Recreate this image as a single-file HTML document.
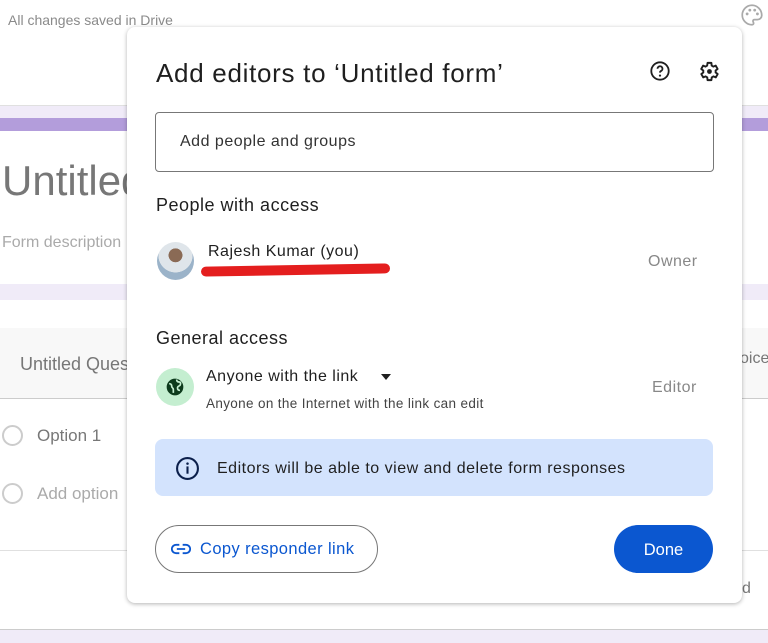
<!DOCTYPE html>
<html><head><style>
body{margin:0;width:768px;height:643px;overflow:hidden;background:#f0ebf8;font-family:"Liberation Sans",sans-serif;position:relative}
.a{position:absolute}
.d{letter-spacing:.5px}
</style></head><body>
<div class="a" style="left:0;top:0;width:768px;height:105px;background:#fff;border-bottom:1px solid #e0e0e0"></div>
<div class="a" style="left:8px;top:12px;font-size:14px;color:#8a8a8a">All changes saved in Drive</div>
<svg class="a" style="left:739px;top:2px" width="26" height="26" viewBox="0 0 24 24"><path d="M12 3a9 9 0 0 0 0 18c1 0 1.5-.7 1.5-1.4 0-.8-.6-1.1-.6-1.9 0-.9.7-1.4 1.5-1.4H17a4 4 0 0 0 4-4c0-5-4-9.3-9-9.3z" fill="none" stroke="#aaa" stroke-width="1.6"/><circle cx="7.5" cy="11" r="1.3" fill="#aaa"/><circle cx="10" cy="7.5" r="1.3" fill="#aaa"/><circle cx="14.5" cy="7.5" r="1.3" fill="#aaa"/><circle cx="17" cy="11" r="1.3" fill="#aaa"/></svg>
<div class="a" style="left:0;top:118px;width:768px;height:13px;background:#b39ddb"></div>
<div class="a" style="left:0;top:131px;width:768px;height:153px;background:#fff"></div>
<div class="a" style="left:2px;top:157px;font-size:42px;color:#777">Untitled</div>
<div class="a" style="left:2px;top:234px;font-size:16px;color:#aaa">Form description</div>
<div class="a" style="left:0;top:300px;width:768px;height:250px;background:#fff"></div>
<div class="a" style="left:0;top:328px;width:768px;height:70px;background:#f8f8f8;border-bottom:1px solid #ccc"></div>
<div class="a" style="left:20px;top:354px;font-size:18px;color:#777">Untitled Question</div>
<div class="a" style="left:740px;top:350px;font-size:16px;color:#777">oice</div>
<div class="a" style="left:2px;top:425px;width:21px;height:21px;border:2px solid #ccc;border-radius:50%;box-sizing:border-box"></div>
<div class="a" style="left:37px;top:426px;font-size:17px;color:#777">Option 1</div>
<div class="a" style="left:2px;top:483px;width:21px;height:21px;border:2px solid #ccc;border-radius:50%;box-sizing:border-box"></div>
<div class="a" style="left:37px;top:484px;font-size:17px;color:#aaa">Add option</div>
<div class="a" style="left:0;top:550px;width:768px;height:78px;background:#fff;border-top:1px solid #e0e0e0;border-bottom:1px solid #ccc"></div>
<div class="a" style="left:742px;top:580px;font-size:16px;color:#777">d</div>

<div class="a" style="left:127px;top:27px;width:615px;height:576px;background:#fff;border-radius:8px;box-shadow:0 1px 4px rgba(0,0,0,.3)"></div>
<div class="a" style="left:156px;top:58px;font-size:26px;letter-spacing:.7px;color:#1f1f1f">Add editors to ‘Untitled form’</div>
<svg class="a" style="left:649px;top:60px" width="22" height="22" viewBox="0 0 24 24"><circle cx="12" cy="12" r="9.5" fill="none" stroke="#1f1f1f" stroke-width="2"/><path d="M9.3 9.5a2.7 2.7 0 1 1 3.8 2.5c-.8.4-1.1.9-1.1 1.8" fill="none" stroke="#1f1f1f" stroke-width="2"/><circle cx="12" cy="17" r="1.2" fill="#1f1f1f"/></svg>
<svg class="a" style="left:697px;top:60px" width="23" height="23" viewBox="0 0 24 24"><path d="M19.4 13a7.5 7.5 0 0 0 0-2l2.1-1.6-2-3.5-2.5 1a7 7 0 0 0-1.7-1L15 3h-4l-.4 2.9a7 7 0 0 0-1.7 1l-2.5-1-2 3.5L6.6 11a7.5 7.5 0 0 0 0 2l-2.1 1.6 2 3.5 2.5-1a7 7 0 0 0 1.7 1L11 21h4l.4-2.9a7 7 0 0 0 1.7-1l2.5 1 2-3.5z" fill="none" stroke="#1f1f1f" stroke-width="2" stroke-linejoin="round"/><circle cx="13" cy="12" r="2.5" fill="#1f1f1f"/></svg>
<div class="a" style="left:155px;top:112px;width:557px;height:58px;border:1px solid #777;border-radius:4px"></div>
<div class="a d" style="left:180px;top:133px;font-size:16px;color:#333">Add people and groups</div>
<div class="a d" style="left:156px;top:195px;font-size:18px;color:#1f1f1f">People with access</div>
<div class="a" style="left:157px;top:242px;width:37px;height:38px;border-radius:50%;background:radial-gradient(circle at 50% 35%,#8a6a55 0 22%,#dfe5ea 23% 55%,#9bb3c9 56%);"></div>
<div class="a d" style="left:208px;top:243px;font-size:16px;color:#1f1f1f">Rajesh Kumar (you)</div>
<div class="a" style="left:201px;top:265px;width:189px;height:10px;background:#e41e1e;border-radius:5px;transform:rotate(-1deg)"></div>
<div class="a d" style="left:648px;top:253px;font-size:16px;color:#888">Owner</div>
<div class="a d" style="left:156px;top:328px;font-size:18px;color:#1f1f1f">General access</div>
<div class="a" style="left:156px;top:368px;width:38px;height:38px;border-radius:50%;background:#c4eed0"></div>
<svg class="a" style="left:165px;top:377px" width="20" height="20" viewBox="0 0 24 24"><circle cx="12" cy="12" r="10" fill="#0d3b1c"/><path d="M5 8c2 0 3 1 3 3s2 2 2 4v4M14 3c0 2 1 3 3 3s2 2 1 4c-1 1-3 1-3 3s1 3 3 3" fill="none" stroke="#c4eed0" stroke-width="2"/></svg>
<div class="a d" style="left:206px;top:368px;font-size:16px;color:#1f1f1f">Anyone with the link</div>
<div class="a" style="left:381px;top:374px;width:0;height:0;border-left:5px solid transparent;border-right:5px solid transparent;border-top:6px solid #1f1f1f"></div>
<div class="a" style="left:206px;top:396px;font-size:13.5px;letter-spacing:.35px;color:#444">Anyone on the Internet with the link can edit</div>
<div class="a d" style="left:652px;top:379px;font-size:16px;color:#888">Editor</div>
<div class="a" style="left:155px;top:439px;width:558px;height:57px;background:#d3e3fd;border-radius:8px"></div>
<svg class="a" style="left:175px;top:456px" width="25" height="25" viewBox="0 0 24 24"><circle cx="12" cy="12" r="10" fill="none" stroke="#0b1f4b" stroke-width="2"/><rect x="11" y="10" width="2" height="7" fill="#0b1f4b"/><circle cx="12" cy="7.3" r="1.2" fill="#0b1f4b"/></svg>
<div class="a d" style="left:217px;top:460px;font-size:16px;color:#1f1f1f">Editors will be able to view and delete form responses</div>
<div class="a" style="left:155px;top:525px;width:221px;height:46px;border:1px solid #777;border-radius:24px"></div>
<svg class="a" style="left:171px;top:541px" width="20" height="16" viewBox="0 0 24 16"><path d="M10 3H6a5 5 0 0 0 0 10h4M14 3h4a5 5 0 0 1 0 10h-4M7 8h10" fill="none" stroke="#0b57d0" stroke-width="2.2"/></svg>
<div class="a" style="left:200px;top:540px;font-size:16.5px;letter-spacing:.4px;color:#0b57d0">Copy responder link</div>
<div class="a" style="left:614px;top:525px;width:99px;height:48px;background:#0b57d0;border-radius:24px;color:#fff;font-size:16.5px;line-height:50px;text-align:center">Done</div>
</body></html>
